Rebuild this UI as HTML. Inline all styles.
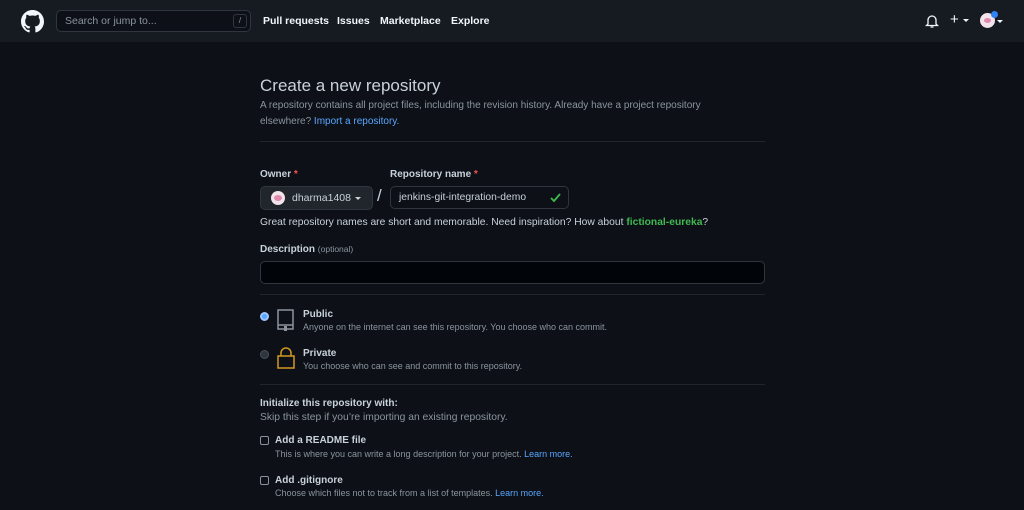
<!DOCTYPE html>
<html><head><meta charset="utf-8"><style>
*{box-sizing:border-box;margin:0;padding:0}
body{width:1024px;height:510px;overflow:hidden;background:#0d1117;font-family:"Liberation Sans",sans-serif;color:#c9d1d9;position:relative}
.hdr{position:absolute;left:0;top:0;width:1024px;height:42px;background:#161b22}
.a{position:absolute;white-space:nowrap}
.nav{font-size:10.5px;font-weight:bold;color:#f0f6fc;top:15px}
.hr{position:absolute;left:260px;width:505px;height:1px;background:#21262d}
.lbl{font-size:10px;font-weight:bold;color:#c9d1d9}
.sm{font-size:9px;color:#8b949e}
.lnk{color:#58a6ff}
.cb{position:absolute;width:9px;height:9px;border:1px solid #8b949e;border-radius:2px;background:#0d1117}
</style></head><body>
<div class="hdr"></div>
<svg class="a" style="left:21px;top:10px" width="23" height="23" viewBox="0 0 16 16"><path fill="#f0f6fc" d="M8 0C3.580 0 0 3.58 0 8c0 3.54 2.29 6.53 5.47 7.59.4.07.55-.17.55-.38 0-.19-.01-.82-.01-1.490-2.01.37-2.53-.49-2.69-.94-.09-.23-.48-.94-.82-1.13-.28-.15-.68-.52-.01-.53.63-.01 1.08.58 1.23.82.72 1.21 1.87.87 2.33.66.07-.52.28-.87.51-1.07-1.78-.2-3.64-.89-3.64-3.95 0-.87.31-1.59.82-2.15-.08-.2-.36-1.02.08-2.12 0 0 .67-.21 2.2.82.64-.18 1.32-.27 2-.27.68 0 1.36.09 2 .27 1.53-1.04 2.2-.82 2.2-.82.44 1.1.16 1.92.08 2.12.51.56.82 1.27.82 2.15 0 3.07-1.87 3.75-3.65 3.95.29.25.54.73.54 1.48 0 1.07-.01 1.93-.01 2.2 0 .21.15.46.55.38A8.013 8.013 0 0016 8c0-4.42-3.58-8-8-8z"/></svg>
<div class="a" style="left:56px;top:10px;width:195px;height:22px;border:1px solid #30363d;border-radius:5px;background:#0d1117"></div>
<div class="a" style="left:65px;top:15px;font-size:10.5px;color:#8b949e">Search or jump to...</div>
<div class="a" style="left:233px;top:14px;width:14px;height:14px;border:1px solid #30363d;border-radius:3px;font-size:8px;color:#8b949e;text-align:center;line-height:12px">/</div>
<div class="a nav" style="left:263px">Pull requests</div>
<div class="a nav" style="left:337px">Issues</div>
<div class="a nav" style="left:380px">Marketplace</div>
<div class="a nav" style="left:451px">Explore</div>
<svg class="a" style="left:925px;top:13px" width="14" height="16" viewBox="0 0 14 16"><path d="M3 11V7a4 4 0 018 0v4l1.5 1.5h-11z M5.5 14h3" fill="none" stroke="#f0f6fc" stroke-width="1.3"/></svg>
<div class="a" style="left:950px;top:11px;font-size:15px;color:#f0f6fc">+</div>
<div class="a" style="left:963px;top:19px;border:3px solid transparent;border-top-color:#f0f6fc"></div>
<div class="a" style="left:980px;top:13px;width:15px;height:15px;border-radius:50%;background:#f2e4ea"></div>
<div class="a" style="left:984px;top:18px;width:7px;height:5px;border-radius:50%;background:#e08ab0"></div>
<div class="a" style="left:991px;top:11px;width:7px;height:7px;border-radius:50%;background:#2f81f7"></div>
<div class="a" style="left:997px;top:20px;border:3px solid transparent;border-top-color:#f0f6fc"></div>

<div class="a" style="left:260px;top:76px;font-size:17px;color:#c9d1d9">Create a new repository</div>
<div class="a sm" style="left:260px;top:98px;font-size:10px;line-height:15.5px">A repository contains all project files, including the revision history. Already have a project repository<br>elsewhere? <span class="lnk">Import a repository.</span></div>
<div class="hr" style="top:141px"></div>
<div class="a lbl" style="left:260px;top:169px">Owner <span style="color:#f85149">*</span></div>
<div class="a lbl" style="left:390px;top:169px">Repository name <span style="color:#f85149">*</span></div>
<div class="a" style="left:260px;top:186px;width:113px;height:24px;border:1px solid #30363d;border-radius:5px;background:#21262d"></div>
<div class="a" style="left:271px;top:191px;width:14px;height:14px;border-radius:50%;background:#f2e4ea"></div>
<div class="a" style="left:274px;top:195px;width:8px;height:6px;border-radius:50%;background:#e08ab0"></div>
<div class="a" style="left:292px;top:192px;font-size:10.5px;color:#c9d1d9">dharma1408</div>
<div class="a" style="left:355px;top:197px;border:3px solid transparent;border-top-color:#c9d1d9"></div>
<div class="a" style="left:377px;top:186px;font-size:17px;color:#c9d1d9">/</div>
<div class="a" style="left:390px;top:186px;width:179px;height:23px;border:1px solid #30363d;border-radius:5px;background:#0d1117"></div>
<div class="a" style="left:399px;top:192px;font-size:10.3px;color:#c9d1d9">jenkins-git-integration-demo</div>
<svg class="a" style="left:549px;top:192px" width="13" height="12" viewBox="0 0 13 12"><path d="M2 6l3 3 6-7" fill="none" stroke="#3fb950" stroke-width="1.8"/></svg>
<div class="a" style="left:260px;top:217px;font-size:10.3px;color:#c9d1d9">Great repository names are short and memorable. Need inspiration? How about <b style="color:#3fb950">fictional-eureka</b>?</div>
<div class="a lbl" style="left:260px;top:244px">Description <span style="font-weight:normal;font-size:8.5px;color:#8b949e">(optional)</span></div>
<div class="a" style="left:260px;top:261px;width:505px;height:23px;border:1px solid #30363d;border-radius:5px;background:#010409"></div>
<div class="hr" style="top:294px"></div>
<div class="a" style="left:260px;top:312px;width:9px;height:9px;border-radius:50%;background:#58a6ff;border:2px solid #9ec5fe"></div>
<svg class="a" style="left:276px;top:308px" width="20" height="24" viewBox="0 0 20 24"><path d="M2 2h15v15H2z M2 17v4h6 M10 21h7v-4" fill="none" stroke="#8b949e" stroke-width="1.5"/><rect x="8" y="18" width="3" height="5" fill="#8b949e"/></svg>
<div class="a lbl" style="left:303px;top:309px">Public</div>
<div class="a sm" style="left:303px;top:322px">Anyone on the internet can see this repository. You choose who can commit.</div>
<div class="a" style="left:260px;top:350px;width:9px;height:9px;border-radius:50%;background:#30363d;border:1px solid #484f58"></div>
<svg class="a" style="left:276px;top:346px" width="20" height="24" viewBox="0 0 20 24"><path d="M5 10V7a5 5 0 0110 0v3 M2 10h16v12H2z" fill="none" stroke="#d29922" stroke-width="1.5"/></svg>
<div class="a lbl" style="left:303px;top:348px">Private</div>
<div class="a sm" style="left:303px;top:361px">You choose who can see and commit to this repository.</div>
<div class="hr" style="top:384px"></div>
<div class="a lbl" style="left:260px;top:398px">Initialize this repository with:</div>
<div class="a" style="left:260px;top:412px;font-size:10.3px;color:#8b949e">Skip this step if you’re importing an existing repository.</div>
<div class="cb" style="left:260px;top:436px"></div>
<div class="a lbl" style="left:275px;top:435px">Add a README file</div>
<div class="a sm" style="left:275px;top:449px">This is where you can write a long description for your project. <span class="lnk">Learn more.</span></div>
<div class="cb" style="left:260px;top:476px"></div>
<div class="a lbl" style="left:275px;top:475px">Add .gitignore</div>
<div class="a sm" style="left:275px;top:488px">Choose which files not to track from a list of templates. <span class="lnk">Learn more.</span></div>
</body></html>
